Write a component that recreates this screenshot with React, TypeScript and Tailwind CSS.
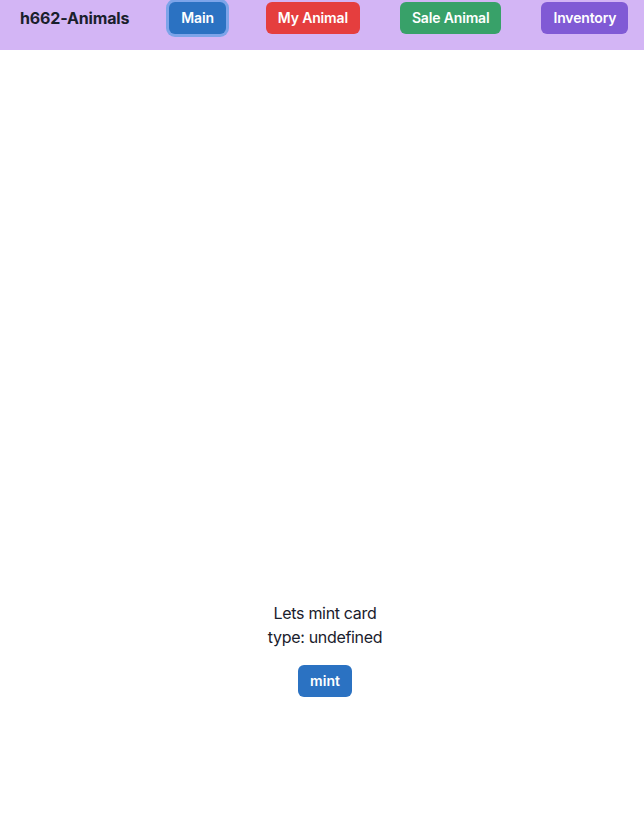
import React from "react";

const navButtons = [
    { label: "My Animal", className: "bg-[#e53e3e]" },
    { label: "Sale Animal", className: "bg-[#38a169]" },
    { label: "Inventory", className: "bg-[#805ad5]" },
];

export default function App() {
    return (
        <div className="min-h-[814px] bg-white text-[#1a202c] font-['Inter','Noto_Sans',sans-serif]">
            <nav className="flex h-[50px] items-start gap-10 whitespace-nowrap bg-[#d3b5f5] px-5 pt-[2px] tracking-[-0.01em]">
                <div className="flex h-8 shrink-0 items-center text-base font-bold text-[#1a202c]">h662-Animals</div>
                <button className="h-8 shrink-0 rounded-md bg-[#2b72c2] px-3 text-sm font-semibold text-white shadow-[0_0_0_3px_rgba(66,153,225,0.6)]">
                    Main
                </button>
                {navButtons.map((b) => (
                    <button key={b.label} className={`h-8 shrink-0 rounded-md px-3 text-sm font-semibold text-white ${b.className}`}>
                        {b.label}
                    </button>
                ))}
            </nav>
            <main className="flex flex-col items-center pl-[6px] pt-[551px] text-base leading-6 tracking-[-0.02em]">
                <p>Lets mint card</p>
                <p>type: undefined</p>
                <button className="mt-4 h-8 rounded-md bg-[#2b72c2] px-3 text-sm font-semibold tracking-normal text-white">mint</button>
            </main>
        </div>
    );
}
